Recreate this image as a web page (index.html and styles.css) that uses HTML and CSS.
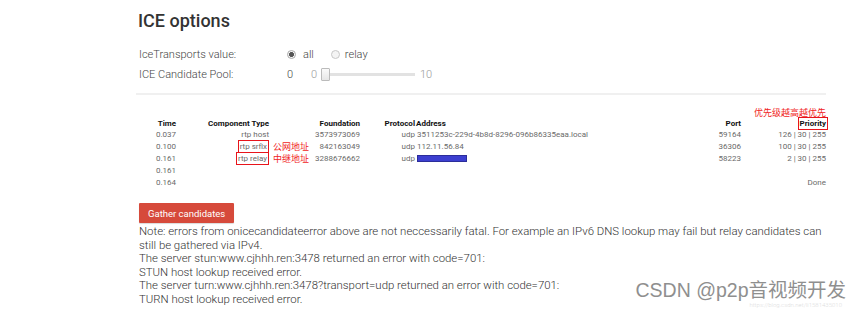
FILE: index.html
```html
<!DOCTYPE html>
<html lang="en">
<head>
<meta charset="utf-8">
<title>ICE options</title>
<link rel="stylesheet" href="styles.css">
</head>
<body>
<div class="page">
  <h2 class="title">ICE options</h2>

  <div class="opt-row">
    <span class="opt-label">IceTransports value:</span>
    <label class="radio"><input type="radio" name="transport" checked><span>all</span></label>
    <label class="radio"><input type="radio" name="transport"><span>relay</span></label>
  </div>
  <div class="opt-row">
    <span class="opt-label">ICE Candidate Pool:</span>
    <span class="pool-value">0</span>
    <span class="range-min">0</span>
    <span class="slider"><span class="thumb"></span><span class="track"></span></span>
    <span class="range-max">10</span>
  </div>

  <hr class="divider">

  <div class="cands">
    <div class="crow head">
      <span>Time</span>
      <span>Component Type</span>
      <span>Foundation</span>
      <span>Protocol</span>
      <span class="addr">Address</span>
      <span>Port</span>
      <span class="prio-head"><span class="note-red top-note">优先级越高越优先</span><span class="mark">Priority</span></span>
    </div>
    <div class="crow">
      <span>0.037</span>
      <span>rtp host</span>
      <span>3573973069</span>
      <span>udp</span>
      <span class="addr">3511253c-229d-4b8d-8296-096b86335eaa.local</span>
      <span>59164</span>
      <span>126 | 30 | 255</span>
    </div>
    <div class="crow">
      <span>0.100</span>
      <span class="comp"><span class="mark">rtp srflx</span><span class="note-red side-note">公网地址</span></span>
      <span>842163049</span>
      <span>udp</span>
      <span class="addr">112.11.56.84</span>
      <span>36306</span>
      <span>100 | 30 | 255</span>
    </div>
    <div class="crow">
      <span>0.161</span>
      <span class="comp"><span class="mark">rtp relay</span><span class="note-red side-note">中继地址</span></span>
      <span>3288676662</span>
      <span>udp</span>
      <span class="addr"><span class="redacted"></span></span>
      <span>58223</span>
      <span>2 | 30 | 255</span>
    </div>
    <div class="crow">
      <span>0.161</span>
      <span></span><span></span><span></span><span class="addr"></span><span></span><span></span>
    </div>
    <div class="crow">
      <span>0.164</span>
      <span></span><span></span><span></span><span class="addr"></span><span></span>
      <span>Done</span>
    </div>
  </div>

  <button class="gather">Gather candidates</button>

  <div class="log">
    <div>Note: errors from onicecandidateerror above are not neccessarily fatal. For example an IPv6 DNS lookup may fail but relay candidates can<br>still be gathered via IPv4.</div>
    <div>The server stun:www.cjhhh.ren:3478 returned an error with code=701:</div>
    <div>STUN host lookup received error.</div>
    <div>The server turn:www.cjhhh.ren:3478?transport=udp returned an error with code=701:</div>
    <div>TURN host lookup received error.</div>
  </div>
</div>

<div class="watermark">
  <div class="wm-main">CSDN @p2p音视频开发</div>
  <div class="wm-url">https://blog.csdn.net/li1581435010</div>
</div>
</body>
</html>
```

FILE: styles.css
```css
html, body {
  margin: 0;
  padding: 0;
  background: #fff;
}

body {
  font-family: Roboto, "Noto Sans CJK SC", sans-serif;
  font-weight: 300;
  color: #333;
  width: 862px;
  height: 309px;
  overflow: hidden;
  position: relative;
}

.page {
  padding: 9px 0 0 138px;
  width: 690px;
}

.title {
  margin: 0;
  font-size: 18px;
  line-height: 24px;
  font-weight: 500;
  color: #333;
}

.opt-row {
  display: flex;
  align-items: center;
  height: 20px;
  font-size: 11px;
  color: #444;
}
.title + .opt-row { margin-top: 11px; }

.opt-label {
  width: 149px;
  padding-left: 1px;
  box-sizing: border-box;
}

.radio {
  display: flex;
  align-items: center;
  margin-right: 17px;
}
.radio input {
  appearance: none;
  -webkit-appearance: none;
  width: 9px;
  height: 9px;
  margin: 0 7px 0 0;
  border-radius: 50%;
  border: 1px solid #c8c8c8;
  background: #f4f4f4;
  box-sizing: border-box;
  position: relative;
}
.radio input:checked {
  background: radial-gradient(circle, #555 0 2.2px, #f4f4f4 2.6px);
  border-color: #aaa;
}
.radio + .radio input { margin-right: 5px; }

.pool-value {
  width: 24px;
}
.range-min {
  color: #999;
  width: 10px;
}
.slider {
  display: flex;
  align-items: center;
  width: 94px;
  height: 14px;
}
.thumb {
  width: 7px;
  height: 11px;
  border: 1px solid #bbb;
  background: linear-gradient(#fafafa, #e6e6e6);
  border-radius: 1px;
  flex: none;
}
.track {
  flex: 1;
  height: 3px;
  background: #e2e2e2;
}
.range-max {
  color: #999;
  margin-left: 5px;
}

.divider {
  margin: 9px 0 0 -2px;
  width: 690px;
  height: 2px;
  border: 0;
  background: #f0f0f0;
}

.cands {
  margin-top: 23px;
  font-size: 8px;
  font-weight: 400;
  color: #6a6a6a;
}
.crow {
  display: grid;
  grid-template-columns: 38px 93px 91px 55px 285px 41px 85px;
  height: 12px;
  line-height: 12px;
  text-align: right;
  white-space: nowrap;
}
.crow.head {
  height: 11px;
  line-height: 11px;
  font-weight: 700;
  color: #111;
}
.crow .addr {
  text-align: left;
  padding-left: 2px;
}
.crow.head .addr { padding-left: 1px; }

.comp, .prio-head {
  position: relative;
}
.mark {
  outline: 1.5px solid #e8141b;
  outline-offset: 1px;
}
.comp .mark { margin-right: 2px; }
.note-red {
  position: absolute;
  color: #f01c1c;
  font-family: "Noto Sans CJK SC", sans-serif;
  font-weight: 400;
  font-size: 9px;
  line-height: 10px;
  white-space: nowrap;
}
.side-note {
  left: 100%;
  margin-left: 4px;
  top: 1px;
}
.top-note {
  right: 0;
  bottom: 11px;
}

.redacted {
  display: inline-block;
  width: 50px;
  height: 7px;
  background: #3c3fd0;
  border: 1px solid #2b2d9a;
  box-sizing: border-box;
  vertical-align: -1px;
}

.gather {
  display: block;
  margin: 14px 0 0 1px;
  height: 20px;
  padding: 0 9px;
  border: 0;
  border-radius: 1px;
  background: #d64a3b;
  color: #fff;
  font-family: Roboto, sans-serif;
  font-size: 9.5px;
  font-weight: 400;
  box-shadow: 0 1px 1px rgba(0,0,0,0.15);
}

.log {
  margin-top: 2px;
  padding-left: 1px;
  font-size: 11.4px;
  line-height: 13.6px;
  color: #333;
  white-space: nowrap;
}

.watermark {
  position: absolute;
  right: 16px;
  bottom: 0;
  text-align: right;
  pointer-events: none;
}
.wm-main {
  font-family: "Liberation Sans", "Noto Sans CJK SC", sans-serif;
  font-size: 19.5px;
  line-height: 22px;
  color: #8f8f8f;
  font-weight: 400;
}
.wm-url {
  font-size: 6px;
  line-height: 8px;
  color: #ddd;
  margin-right: 4px;
}
```
